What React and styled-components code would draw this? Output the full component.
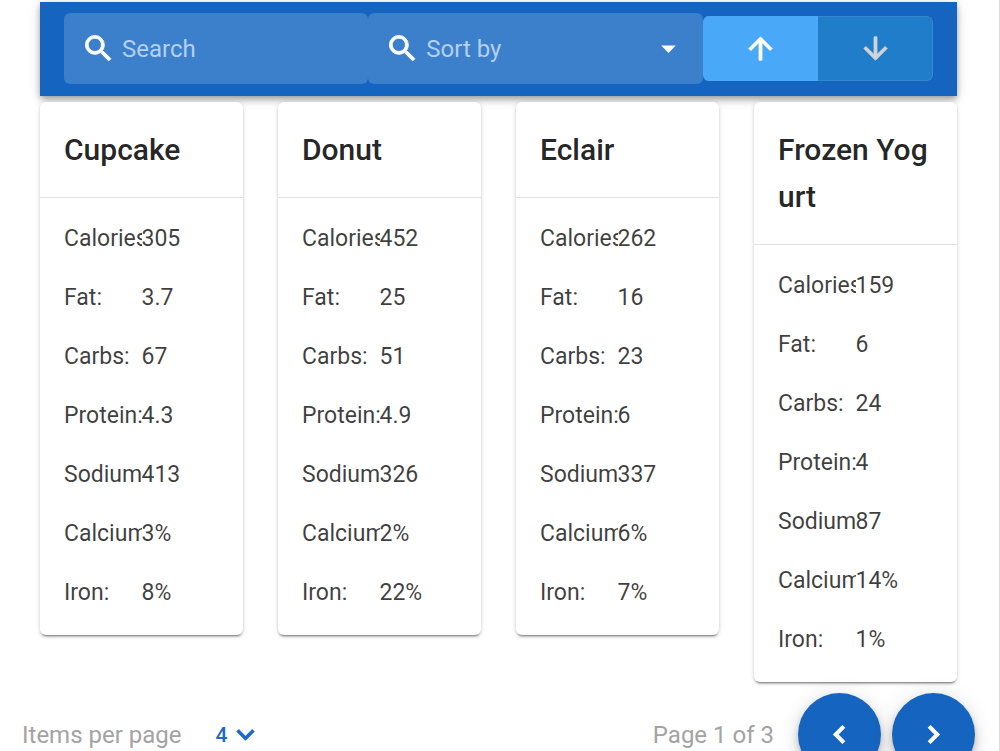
import React, { useState } from "react";
import styled, { createGlobalStyle } from "styled-components";
import {
  MdArrowDownward,
  MdArrowDropDown,
  MdArrowUpward,
  MdChevronLeft,
  MdChevronRight,
  MdExpandMore,
} from "react-icons/md";

const keys = ["Calories", "Fat", "Carbs", "Protein", "Sodium", "Calcium", "Iron"];

const items = [
  { name: "Cupcake", values: ["305", "3.7", "67", "4.3", "413", "3%", "8%"] },
  { name: "Donut", values: ["452", "25", "51", "4.9", "326", "2%", "22%"] },
  { name: "Eclair", values: ["262", "16", "23", "6", "337", "6%", "7%"] },
  { name: "Frozen Yogurt", values: ["159", "6", "24", "4", "87", "14%", "1%"] },
];

const GlobalStyle = createGlobalStyle`
  * {
    box-sizing: border-box;
  }
  html {
    scrollbar-width: none;
  }
  body {
    margin: 0;
    background: #ffffff;
    font-family: Roboto, sans-serif;
    font-size: 24px;
    color: rgba(0, 0, 0, 0.87);
  }
  button,
  input,
  select {
    font: inherit;
    border: none;
    outline: none;
  }
`;

const Page = styled.div`
  min-height: 100vh;
  padding-top: 2px;
  border-right: 1px solid #dcdcdc;
`;

const Main = styled.main`
  margin: 0 42px 0 40px;
`;

const Toolbar = styled.header`
  display: grid;
  grid-template-columns: 10fr 11fr 230px;
  align-items: center;
  padding: 11px 24px 12px;
  background: #1565c0;
  box-shadow: 0 3px 6px -1px rgba(0, 0, 0, 0.3), 0 5px 8px rgba(0, 0, 0, 0.12),
    0 1px 14px rgba(0, 0, 0, 0.1);
`;

const Field = styled.label`
  display: flex;
  align-items: center;
  gap: 6px;
  height: 71px;
  min-width: 0;
  padding: 0 17px;
  border-radius: 6px;
  background: #3c7fcb;
  color: #ffffff;
  & > svg {
    flex: none;
    width: 35px;
    height: 35px;
  }
  & > input,
  & > select {
    flex: 1;
    min-width: 0;
    padding: 0;
    appearance: none;
    background: transparent;
    color: #b4d0f4;
  }
  & > input::placeholder {
    color: #b4d0f4;
    opacity: 1;
  }
`;

const Toggle = styled.div`
  display: flex;
  height: 65px;
  border-radius: 6px;
  overflow: hidden;
`;

const ToggleButton = styled.button`
  flex: 1;
  display: flex;
  align-items: center;
  justify-content: center;
  padding: 0;
  cursor: pointer;
  background: ${({ $active }) => ($active ? "#49a9f8" : "#1f7dca")};
  color: ${({ $active }) => ($active ? "#ffffff" : "#d0d4d8")};
  border: 1px solid ${({ $active }) => ($active ? "#49a9f8" : "#3389ce")};
  border-left: none;
  border-radius: ${({ $active }) => ($active ? "0" : "0 6px 6px 0")};
  & path:last-child {
    stroke: currentColor;
    stroke-width: 0.6;
  }
`;

const Cards = styled.section`
  display: grid;
  grid-template-columns: repeat(4, minmax(0, 1fr));
  align-items: start;
  gap: 35px;
  padding-top: 6px;
`;

const Card = styled.article`
  border-radius: 6px;
  background: #ffffff;
  box-shadow: 0 3px 2px -2px rgba(0, 0, 0, 0.4), 0 2px 3px rgba(0, 0, 0, 0.12),
    0 1px 5px rgba(0, 0, 0, 0.12);
  & > h2 {
    margin: 0;
    padding: 24px;
    border-bottom: 1px solid #e2e2e2;
    font-size: 30px;
    font-weight: 500;
    line-height: 47px;
    word-break: break-all;
  }
  & > dl {
    margin: 0;
    padding: 11px 24px 13px;
  }
`;

const Row = styled.div`
  display: flex;
  font-size: 23px;
  line-height: 59px;
  color: rgba(0, 0, 0, 0.76);
  & > dt,
  & > dd {
    flex: 1 1 0;
    min-width: 0;
    margin: 0;
    overflow: hidden;
    white-space: nowrap;
  }
`;

const Footer = styled.footer`
  display: flex;
  align-items: center;
  margin-top: 11px;
  padding: 0 24px 12px 22px;
  color: #a3a3a3;
`;

const PerPage = styled.label`
  display: flex;
  align-items: center;
  flex: 1;
  gap: 34px;
`;

const PerPageSelect = styled.span`
  display: flex;
  align-items: center;
  color: #1b6ac9;
  & > select {
    padding: 0;
    appearance: none;
    background: transparent;
    color: inherit;
    font-size: 21px;
    font-weight: 500;
    cursor: pointer;
  }
  & path:last-child {
    stroke: currentColor;
    stroke-width: 0.6;
  }
`;

const PageButtons = styled.div`
  display: flex;
  gap: 11px;
  margin-left: 24px;
`;

const RoundButton = styled.button`
  display: flex;
  align-items: center;
  justify-content: center;
  width: 83px;
  height: 83px;
  padding: 0;
  border-radius: 50%;
  background: #1565c0;
  color: #ffffff;
  cursor: pointer;
  box-shadow: 0 4px 7px -1px rgba(0, 0, 0, 0.2), 0 8px 14px rgba(0, 0, 0, 0.12),
    0 1px 22px rgba(0, 0, 0, 0.1);
  & path:last-child {
    stroke: currentColor;
    stroke-width: 0.8;
  }
`;

function SearchIcon() {
  return (
    <svg viewBox="0 0 24 24" fill="currentColor" stroke="currentColor" strokeWidth="0.6">
      <path d="M9.5,3A6.5,6.5 0 0,1 16,9.5C16,11.11 15.41,12.59 14.44,13.73L14.71,14H15.5L20.5,19L19,20.5L14,15.5V14.71L13.73,14.44C12.59,15.41 11.11,16 9.5,16A6.5,6.5 0 0,1 3,9.5A6.5,6.5 0 0,1 9.5,3M9.5,5C7,5 5,7 5,9.5C5,12 7,14 9.5,14C12,14 14,12 14,9.5C14,7 12,5 9.5,5Z" />
    </svg>
  );
}

function ItemCard({ item }) {
  return (
    <Card>
      <h2>{item.name}</h2>
      <dl>
        {keys.map((key, i) => (
          <Row key={key}>
            <dt>{key}:</dt>
            <dd>{item.values[i]}</dd>
          </Row>
        ))}
      </dl>
    </Card>
  );
}

export default function App() {
  const [search, setSearch] = useState("");
  const [sortBy, setSortBy] = useState("");
  const [sortDesc, setSortDesc] = useState(false);
  const [perPage, setPerPage] = useState("4");
  const [page, setPage] = useState(1);

  return (
    <Page>
      <GlobalStyle />
      <Main>
        <Toolbar>
          <Field>
            <SearchIcon />
            <input
              type="text"
              placeholder="Search"
              aria-label="Search"
              value={search}
              onChange={(e) => setSearch(e.target.value)}
            />
          </Field>
          <Field>
            <SearchIcon />
            <select
              aria-label="Sort by"
              value={sortBy}
              onChange={(e) => setSortBy(e.target.value)}
            >
              <option value="">Sort by</option>
              {keys.map((key) => (
                <option key={key}>{key}</option>
              ))}
            </select>
            <MdArrowDropDown />
          </Field>
          <Toggle>
            <ToggleButton
              $active={!sortDesc}
              aria-label="Ascending"
              onClick={() => setSortDesc(false)}
            >
              <MdArrowUpward size={35} />
            </ToggleButton>
            <ToggleButton
              $active={sortDesc}
              aria-label="Descending"
              onClick={() => setSortDesc(true)}
            >
              <MdArrowDownward size={35} />
            </ToggleButton>
          </Toggle>
        </Toolbar>
        <Cards>
          {items.map((item) => (
            <ItemCard key={item.name} item={item} />
          ))}
        </Cards>
      </Main>
      <Footer>
        <PerPage>
          Items per page
          <PerPageSelect>
            <select value={perPage} onChange={(e) => setPerPage(e.target.value)}>
              <option>4</option>
              <option>8</option>
            </select>
            <MdExpandMore size={35} />
          </PerPageSelect>
        </PerPage>
        <span>Page {page} of 3</span>
        <PageButtons>
          <RoundButton
            aria-label="Previous page"
            onClick={() => setPage(Math.max(1, page - 1))}
          >
            <MdChevronLeft size={35} />
          </RoundButton>
          <RoundButton
            aria-label="Next page"
            onClick={() => setPage(Math.min(3, page + 1))}
          >
            <MdChevronRight size={35} />
          </RoundButton>
        </PageButtons>
      </Footer>
    </Page>
  );
}
